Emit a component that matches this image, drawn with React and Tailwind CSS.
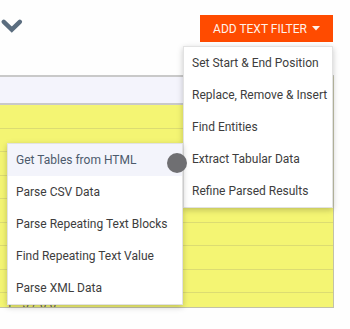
import React from "react";

const menu1 = [
  "Set Start & End Position",
  "Replace, Remove & Insert",
  "Find Entities",
  "Extract Tabular Data",
  "Refine Parsed Results",
];

const menu2 = [
  "Get Tables from HTML",
  "Parse CSV Data",
  "Parse Repeating Text Blocks",
  "Find Repeating Text Value",
  "Parse XML Data",
];

export default function App() {
  const rows = Array.from({ length: 9 });
  return (
    <div className="relative w-[350px] h-[329px] overflow-hidden bg-[#fefefe] font-['Roboto',sans-serif]">
      {/* top bar */}
      <div className="flex items-start justify-between h-[75px] pr-[17px]">
        <svg className="mt-[19px] ml-[1px]" width="22" height="14" viewBox="0 0 22 14">
          <polyline
            points="2.8,2.8 10.8,10.6 18.8,2.8"
            fill="none"
            stroke="#5b6d7f"
            strokeWidth="4.4"
            strokeLinecap="round"
            strokeLinejoin="miter"
          />
        </svg>
        <button className="mt-[15px] w-[133px] h-[27px] bg-[#ff4b00] text-[#fff1ea] text-[12px] leading-none flex items-center justify-center gap-[5px]">
          <span>ADD TEXT FILTER</span>
          <svg width="8" height="5" viewBox="0 0 8 5">
            <polygon points="0,0 8,0 4,4.5" fill="#fff1ea" />
          </svg>
        </button>
      </div>

      {/* table */}
      <div className="w-[334px] h-[233px] overflow-hidden border-t-2 border-r border-b border-[#c9c9c9] border-r-[#c2c2a8] border-b-[#c2c2a8] flex flex-col">
        <div className="h-[28px] shrink-0 bg-[#f4f4fc] border-b-2 border-[#c9c9c9]" />
        <div className="flex-1 bg-[#f4f573] flex flex-col overflow-hidden">
          {rows.map((_, i) => (
            <div
              key={i}
              className="h-[23.5px] shrink-0 border-b border-[#dcdc72] flex items-center pl-[6px] text-[12px] text-[#666]"
            >
              {i === 8 ? "1 - 5 / 0 0" : ""}
            </div>
          ))}
        </div>
      </div>

      {/* menu 1 */}
      <div className="absolute left-[183px] top-[46px] w-[150px] bg-white shadow-[0_2px_6px_rgba(0,0,0,0.22)] border border-[#e2e2e2] text-[12px] text-[#3d3d3d]">
        {menu1.map((t) => (
          <div key={t} className="h-[32px] flex items-center pl-[8px] whitespace-nowrap">
            {t}
          </div>
        ))}
      </div>

      {/* menu 2 */}
      <div className="absolute left-[7px] top-[143px] w-[176px] bg-white shadow-[0_2px_6px_rgba(0,0,0,0.22)] border border-[#e2e2e2] text-[12px] text-[#3d3d3d]">
        {menu2.map((t, i) => (
          <div
            key={t}
            className={
              i === 0
                ? "h-[32px] flex items-center pl-[8px] whitespace-nowrap bg-[#f3f4fb] text-[#4c5a6c]"
                : "h-[32px] flex items-center pl-[8px] whitespace-nowrap"
            }
          >
            {t}
          </div>
        ))}
      </div>

      {/* cursor */}
      <div className="absolute left-[167px] top-[153px] w-[20px] h-[20px] rounded-full bg-[#6f6f72]" />
    </div>
  );
}
